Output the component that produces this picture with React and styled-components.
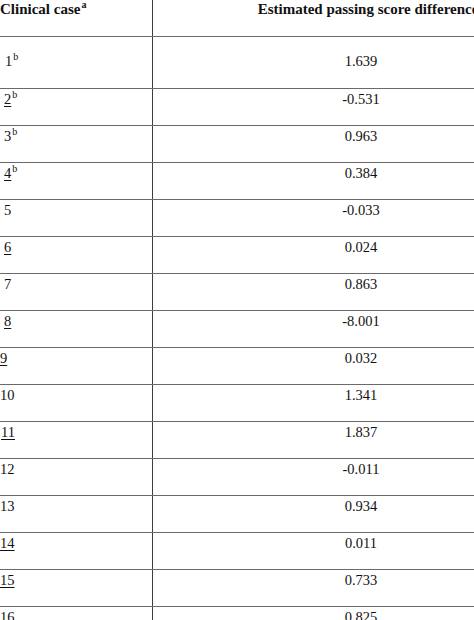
import React from "react";
import { styled, createGlobalStyle } from "styled-components";

const GlobalStyle = createGlobalStyle`
  html, body {
    margin: 0;
    padding: 0;
    background: #fff;
    overflow: hidden;
  }
  body {
    font-family: "Liberation Serif", "Times New Roman", serif;
    color: #111;
  }
`;

const Table = styled.div`
  width: 569px;
  display: flex;
  flex-direction: column;
`;

const Row = styled.div`
  display: grid;
  grid-template-columns: 153px 416px;
  height: ${(p) => p.$height}px;
  border-bottom: 1px solid #6a6a6a;
  font-size: ${(p) => (p.$head ? 15 : 14.5)}px;
  line-height: 16px;
  font-weight: ${(p) => (p.$head ? 700 : 400)};
`;

const CaseCell = styled.div`
  border-right: 1px solid #3c3c3c;
  padding-top: ${(p) => p.$top}px;
  padding-left: ${(p) => p.$indent}px;
  white-space: nowrap;
`;

const ValueCell = styled.div`
  padding-top: ${(p) => p.$top}px;
  padding-left: ${(p) => p.$shift || 0}px;
  text-align: center;
  white-space: nowrap;
`;

const Num = styled.span`
  text-decoration: ${(p) => (p.$under ? "underline" : "none")};
  text-underline-offset: 2px;
  text-decoration-thickness: 1px;
`;

const Sup = styled.sup`
  font-size: 10px;
  line-height: 0;
  vertical-align: 6px;
  margin-left: 1px;
`;

const rows = [
  { n: "1", sup: true, value: "1.639", indent: 5 },
  { n: "2", sup: true, under: true, value: "-0.531", indent: 4 },
  { n: "3", sup: true, value: "0.963", indent: 4 },
  { n: "4", sup: true, under: true, value: "0.384", indent: 4 },
  { n: "5", value: "-0.033", indent: 4 },
  { n: "6", under: true, value: "0.024", indent: 4 },
  { n: "7", value: "0.863", indent: 4 },
  { n: "8", under: true, value: "-8.001", indent: 4 },
  { n: "9", under: true, value: "0.032", indent: -1 },
  { n: "10", value: "1.341", indent: 0 },
  { n: "11", under: true, value: "1.837", indent: 1 },
  { n: "12", value: "-0.011", indent: 0 },
  { n: "13", value: "0.934", indent: 0 },
  { n: "14", under: true, value: "0.011", indent: 0 },
  { n: "15", under: true, value: "0.733", indent: 0 },
  { n: "16", under: true, value: "0.825", indent: 0 },
];

export default function App() {
  return (
    <>
      <GlobalStyle />
      <Table>
        <Row $head $height={36}>
          <CaseCell $top={1} $indent={0}>
            Clinical case<Sup>a</Sup>
          </CaseCell>
          <ValueCell $top={1} $shift={14}>
            Estimated passing score difference
          </ValueCell>
        </Row>
        {rows.map((r, i) => (
          <Row key={r.n} $height={i === 0 ? 51 : 36}>
            <CaseCell $top={i === 0 ? 16 : 2} $indent={r.indent}>
              <Num $under={r.under}>{r.n}</Num>
              {r.sup && <Sup>b</Sup>}
            </CaseCell>
            <ValueCell $top={i === 0 ? 16 : 2}>{r.value}</ValueCell>
          </Row>
        ))}
      </Table>
    </>
  );
}
